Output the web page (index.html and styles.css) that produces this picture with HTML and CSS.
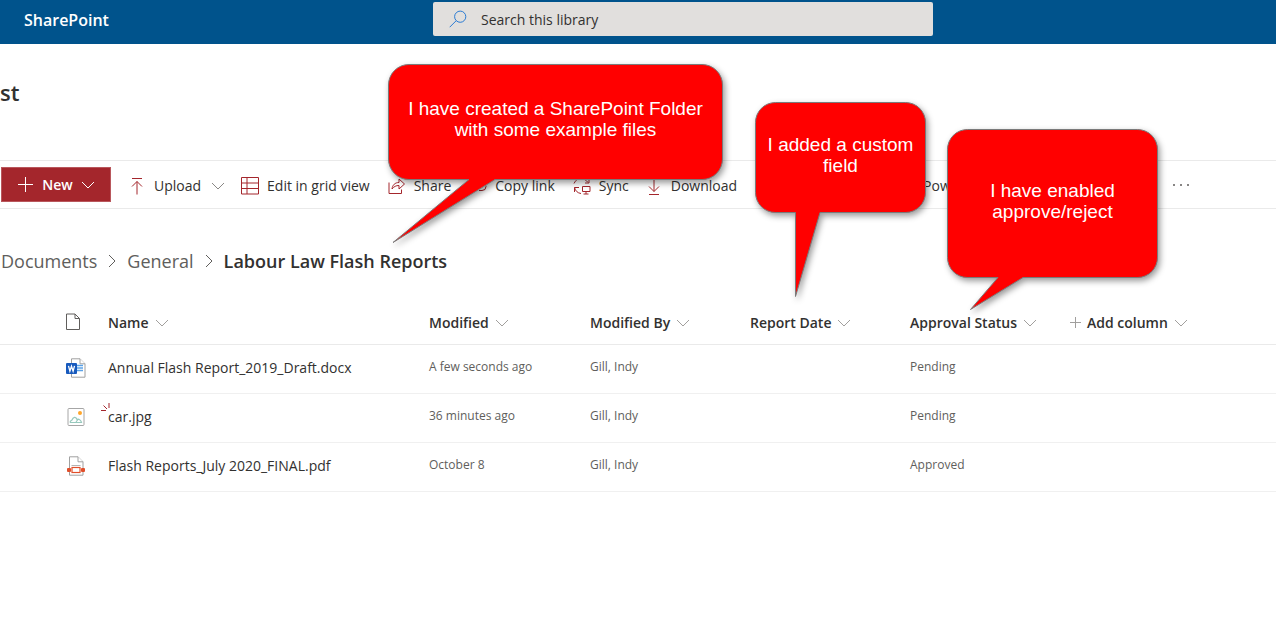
FILE: index.html
```html
<!DOCTYPE html>
<html lang="en">
<head>
<meta charset="utf-8">
<title>SharePoint</title>
<link rel="stylesheet" href="styles.css">
</head>
<body>
<svg class="defs" aria-hidden="true">
  <symbol id="chevron" viewBox="0 0 14 8"><path d="M1 1l6 6 6-6"/></symbol>
  <symbol id="crumb" viewBox="0 0 8 14"><path d="M1 1l6 6-6 6"/></symbol>
</svg>

<header class="suite">
  <a class="brand" href="#">SharePoint</a>
  <label class="search">
    <svg class="search-icon" width="18" height="18" viewBox="0 0 18 18"><circle cx="11.2" cy="6.7" r="5.6"/><path d="M7.2 10.7L.7 17.2"/></svg>
    <input type="text" aria-label="Search this library" placeholder="Search this library">
  </label>
</header>

<div class="site"><h1>st</h1></div>

<nav class="commands" aria-label="Commands">
  <button class="new" type="button">
    <svg width="17" height="17" viewBox="0 0 17 17"><path d="M8.5 1v15M1 8.500h15"/></svg>
    New
    <svg class="chev" width="14" height="8"><use href="#chevron"/></svg>
  </button>
  <button class="cmd upload" type="button">
    <svg width="14" height="18" viewBox="0 0 14 18"><path d="M2 1.500h10M7 4.500v13M2 9.500l5-5 5 5"/></svg>
    Upload
    <svg class="chev" width="14" height="8"><use href="#chevron"/></svg>
  </button>
  <button class="cmd" type="button">
    <svg width="18" height="18" viewBox="0 0 18 18"><path d="M.5.5h17v16.500H.5zM.5 6h17M.5 11.500h17M6 .5v16.500"/></svg>
    Edit in grid view
  </button>
  <button class="cmd" type="button">
    <svg width="18" height="18" viewBox="0 0 18 18"><path d="M1 5.500v11h12.500v-4M4 12c.5-4 3-6.500 7-6.500V2l5.500 5-5.500 5V8.500c-3 0-5 1-7 3.500z"/></svg>
    Share
  </button>
  <button class="cmd" type="button">
    <svg width="18" height="18" viewBox="0 0 18 18"><path d="M8 5.500H5a4 4 0 000 8h3M10 5.500h3a4 4 0 010 8h-3M5 9.500h8"/></svg>
    Copy link
  </button>
  <button class="cmd" type="button">
    <svg width="18" height="18" viewBox="0 0 18 18"><path d="M1 6.500C2.500 3 5 1.500 8 1.500s5 1.500 7 4M16 2v4h-4M1.500 15v-4.500H6M1.500 10.500c1 3.500 3 5.500 6.500 6M9.500 9.500h7.500v5H9.500zM13 14.500V17M10.500 17h5"/></svg>
    Sync
  </button>
  <button class="cmd narrow" type="button">
    <svg width="14" height="18" viewBox="0 0 14 18"><path d="M2 17.500h10M7 1v13.500M2 9.500l5 5 5-5"/></svg>
    Download
  </button>
  <button class="cmd power" type="button">Power</button>
  <button class="more" type="button" aria-label="More">
    <svg width="18" height="4" viewBox="0 0 18 4"><circle cx="2" cy="2" r="1"/><circle cx="9" cy="2" r="1"/><circle cx="16" cy="2" r="1"/></svg>
  </button>
</nav>

<main>
  <nav class="crumbs" aria-label="Breadcrumb">
    <a href="#">Documents</a>
    <svg width="8" height="14"><use href="#crumb"/></svg>
    <a href="#">General</a>
    <svg width="8" height="14"><use href="#crumb"/></svg>
    <span class="current">Labour Law Flash Reports</span>
  </nav>

  <table class="files">
    <colgroup><col class="c-icon"><col class="c-name"><col class="c-modified"><col class="c-field"><col class="c-field"><col class="c-field"><col></colgroup>
    <thead>
      <tr>
        <th><svg class="page" width="16" height="18" viewBox="0 0 16 18"><path d="M1.500 1h8.500l4.500 4.500V16.500h-13zM10 1v4.500h4.500"/></svg></th>
        <th><button type="button">Name<svg width="14" height="8"><use href="#chevron"/></svg></button></th>
        <th><button type="button">Modified<svg width="14" height="8"><use href="#chevron"/></svg></button></th>
        <th><button type="button">Modified By<svg width="14" height="8"><use href="#chevron"/></svg></button></th>
        <th><button type="button">Report Date<svg width="14" height="8"><use href="#chevron"/></svg></button></th>
        <th><button type="button">Approval Status<svg width="14" height="8"><use href="#chevron"/></svg></button></th>
        <th><button type="button"><svg class="plus" width="11" height="11" viewBox="0 0 11 11"><path d="M5.500 0v11M0 5.500h11"/></svg>Add column<svg width="14" height="8"><use href="#chevron"/></svg></button></th>
      </tr>
    </thead>
    <tbody>
      <tr>
        <td><svg width="22" height="20" viewBox="0 0 22 20"><path d="M6.500.8h8.500l5 5v13.400H6.500z" fill="#fff" stroke="#a0a0a0"/><path d="M15 .8v5h5" fill="#fff" stroke="#a0a0a0"/><path d="M12 7.500h6M12 10h6M12 12.500h6" stroke="#5ba2e8" stroke-width="1.400"/><rect x="1" y="5" width="11" height="11" rx="1" fill="#185abd"/><path d="M3.500 7.800l1.400 5.400 1.600-5 1.600 5 1.400-5.400" fill="none" stroke="#fff" stroke-width="1.300"/></svg></td>
        <td class="name"><a href="#">Annual Flash Report_2019_Draft.docx</a></td>
        <td>A few seconds ago</td><td>Gill, Indy</td><td></td><td>Pending</td><td></td>
      </tr>
      <tr>
        <td><svg width="22" height="20" viewBox="0 0 22 20"><rect x="3" y="1.500" width="16" height="17" rx="1" fill="#fff" stroke="#a6a6a6"/><circle cx="15" cy="6" r="2" fill="#ffa62b"/><path d="M5 15.500c0-1.500 1-2 2-2.500 1-3 4-4 5-.5 2-1 4 1 4.500 3H5M11 15l2-2.500" fill="none" stroke="#97c9bd" stroke-width="1.200"/></svg></td>
        <td class="name"><a href="#">car.jpg<svg class="fresh" width="9" height="9" viewBox="0 0 9 9"><path d="M8 0v5M2.500 2.500l3.500 3.500M0 7.500h5"/></svg></a></td>
        <td>36 minutes ago</td><td>Gill, Indy</td><td></td><td>Pending</td><td></td>
      </tr>
      <tr>
        <td><svg width="22" height="20" viewBox="0 0 22 20"><path d="M4.500.8h8.500l5 5v13.400H4.500z" fill="#fff" stroke="#a0a0a0"/><path d="M13 .8v5h5" fill="#fff" stroke="#a0a0a0"/><path d="M6.500 9.500h9" stroke="#b4b4b4"/><rect x="2" y="12" width="4" height="4" rx="1" fill="#e04f2b"/><rect x="16" y="12" width="4" height="4" rx="1" fill="#e04f2b"/><rect x="7" y="11.500" width="8" height="5" fill="#fff" stroke="#e04f2b" stroke-width="1.200"/></svg></td>
        <td class="name"><a href="#">Flash Reports_July 2020_FINAL.pdf</a></td>
        <td>October 8</td><td>Gill, Indy</td><td></td><td>Approved</td><td></td>
      </tr>
    </tbody>
  </table>
</main>

<aside class="callout folder">
  <svg width="335" height="179" viewBox="0 0 335 179"><path d="M21 .5H314a20.500 20.500 0 0 1 20.500 20.500V95a20.500 20.500 0 0 1-20.500 20.500H107L5 178.500 81 115.500H21A20.500 20.500 0 0 1 .5 95V21A20.500 20.500 0 0 1 21 .5z"/></svg>
  <p>I have created a SharePoint Folder with some example files</p>
</aside>
<aside class="callout field">
  <svg width="171" height="196" viewBox="0 0 171 196"><path d="M20.500.5H150.500a20 20 0 0 1 20 20V90.500a20 20 0 0 1-20 20H65L40.500 194.500V110.500h-20a20 20 0 0 1-20-20V20.500a20 20 0 0 1 20-20z"/></svg>
  <p>I added a custom field</p>
</aside>
<aside class="callout approve">
  <svg width="211" height="182" viewBox="0 0 211 182"><path d="M20.500.5H190.500a20 20 0 0 1 20 20V128.500a20 20 0 0 1-20 20H76L23.500 180.500 51 148.500H20.500a20 20 0 0 1-20-20V20.500a20 20 0 0 1 20-20z"/></svg>
  <p>I have enabled approve/reject</p>
</aside>
</body>
</html>
```
FILE: styles.css
```css
* { box-sizing: border-box; }
body {
  margin: 0;
  position: relative;
  font: 14px/20px "Open Sans", "Noto Sans", sans-serif;
  color: #323130;
  background: #fff;
  overflow-x: hidden;
}
.defs { position: absolute; width: 0; height: 0; }
svg { flex: none; fill: none; stroke: currentColor; }
a { color: inherit; text-decoration: none; }
button { font: inherit; color: inherit; background: none; border: 0; padding: 0; white-space: nowrap; }

.suite {
  display: flex;
  height: 44px;
  padding: 2px 0 8px 24px;
  background: #00538c;
}
.brand { width: 409px; padding-top: 8px; font-size: 16px; font-weight: 600; color: #fff; }
.search {
  display: flex;
  align-items: center;
  gap: 14px;
  width: 500px;
  padding: 0 16px;
  border-radius: 2px;
  background: #e1dfdd;
}
.search-icon { color: #2b7cd3; }
.search input {
  flex: 1;
  min-width: 0;
  padding: 2px 0 0;
  border: 0;
  background: none;
  font: inherit;
  color: #323130;
}
.search input::placeholder { color: #323130; opacity: 1; }

.site { height: 116px; padding-top: 32px; }
h1 { margin: 0; font-size: 22px; line-height: 32px; font-weight: 600; }

.commands {
  display: flex;
  align-items: center;
  height: 49px;
  padding-left: 1px;
  border-top: 1px solid #eaeaea;
  border-bottom: 1px solid #eaeaea;
}
.new {
  display: flex;
  align-items: center;
  justify-content: center;
  gap: 8px;
  width: 110px;
  height: 35px;
  margin-right: 19px;
  border: 1px solid #b9575c;
  background: #a4262c;
  color: #fff;
  font-weight: 600;
}
.cmd { display: flex; align-items: center; gap: 8px; margin-right: 18px; padding-top: 2px; }
.cmd svg { color: #a4262c; }
.cmd .chev { color: #8a8886; }
.upload { gap: 10px; margin-right: 16px; }
.narrow { gap: 10px; }
.power { margin-left: 168px; }
.more { margin-left: 190px; }
.more svg { fill: #605e5c; stroke: none; display: block; }

.crumbs {
  display: flex;
  align-items: center;
  gap: 11px;
  padding: 38px 0 24px 1px;
  font-size: 18px;
  line-height: 28px;
  color: #605e5c;
}
.current { font-weight: 600; color: #323130; }

.files { width: 100%; border-collapse: collapse; table-layout: fixed; }
.c-icon { width: 108px; }
.c-name { width: 321px; }
.c-modified { width: 161px; }
.c-field { width: 160px; }
.files th, .files td { padding: 0; text-align: left; white-space: nowrap; }
.files th { height: 45px; padding-top: 3px; border-bottom: 1px solid #eaeaea; font-weight: 600; }
.files td { height: 49px; padding-bottom: 4px; border-bottom: 1px solid #f0f0f0; font-size: 12px; color: #605e5c; }
.files th:first-child { padding: 2px 0 0 65px; }
.files td:first-child { padding: 0 0 2px 65px; }
.files td:first-child svg { display: block; stroke: none; }
.page { display: block; color: #605e5c; }
.files th button { display: flex; align-items: center; gap: 6px; }
.files th button svg { color: #a19f9d; }
.files .name { padding: 0 0 2px; font-size: 14px; color: #323130; }
.name a { position: relative; }
.fresh { position: absolute; left: -7px; top: -4px; color: #a4262c; }

.callout {
  position: absolute;
  display: flex;
  align-items: center;
  justify-content: center;
  padding: 0 8px 6px;
  font: 19px/21px "Liberation Sans", Arial, sans-serif;
  color: #fff;
  text-align: center;
}
.callout svg {
  position: absolute;
  left: 0;
  top: 0;
  fill: #f00;
  stroke: #7a7a7a;
  overflow: visible;
  filter: drop-shadow(2px 3px 3px rgba(0, 0, 0, 0.4));
}
.callout p { position: relative; margin: 0; }
.folder { left: 388px; top: 64px; width: 335px; height: 116px; }
.field { left: 755px; top: 102px; width: 171px; height: 111px; }
.approve { left: 947px; top: 129px; width: 211px; height: 149px; padding: 0 32px 6px; }
```
